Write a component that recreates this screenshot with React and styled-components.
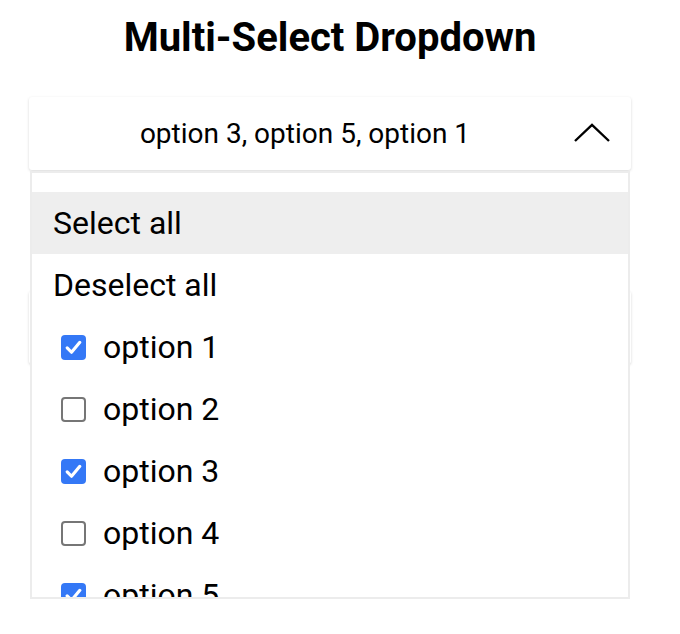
import React, { useState } from "react"
import styled, { createGlobalStyle } from "styled-components"

const GlobalStyle = createGlobalStyle`
    html, body {
        margin: 0;
        min-height: 634px;
        background: #fff;
        font-family: Roboto, "Liberation Sans", sans-serif;
        color: #000;
    }
`;

const options = ["option 1", "option 2", "option 3", "option 4", "option 5", "option 6", "option 7"];

export default function App() {
    const [selected, setSelected] = useState(["option 3", "option 5", "option 1"]);
    const [open, setOpen] = useState(true);

    const toggle = (opt) => {
        setSelected((s) => (s.includes(opt) ? s.filter((o) => o !== opt) : [...s, opt]));
    };

    return (
        <Page>
            <GlobalStyle />
            <Title>Multi-Select Dropdown</Title>

            <Wrapper>
                <Header onClick={() => setOpen(!open)}>
                    <HeaderText>{selected.join(", ")}</HeaderText>
                    <Chevron viewBox="0 0 38 20" $up={open}>
                        <polyline points="2,18 19,2 36,18" />
                    </Chevron>
                </Header>
                {open && (
                    <Menu>
                        <Item $active onClick={() => setSelected([...options])}>Select all</Item>
                        <Item onClick={() => setSelected([])}>Deselect all</Item>
                        {options.map((opt) => (
                            <Item key={opt} $option onClick={() => toggle(opt)}>
                                <Box $checked={selected.includes(opt)}>
                                    {selected.includes(opt) && (
                                        <svg viewBox="0 0 24 24" width="19" height="19">
                                            <polyline points="4,12.5 9.5,18 20,5.5" />
                                        </svg>
                                    )}
                                </Box>
                                {opt}
                            </Item>
                        ))}
                    </Menu>
                )}
            </Wrapper>

            <Wrapper>
                <Header>
                    <HeaderText>Select...</HeaderText>
                    <Chevron viewBox="0 0 38 20">
                        <polyline points="2,18 19,2 36,18" />
                    </Chevron>
                </Header>
            </Wrapper>
        </Page>
    )
}

const Page = styled.div`
    width: 602px;
    margin-left: 29px;
    padding-top: 15px;
`;

const Title = styled.h1`
    margin: 0 0 36px;
    font-size: 40px;
    line-height: 46px;
    font-weight: 700;
    text-align: center;
`;

const Wrapper = styled.div`
    position: relative;
    margin-bottom: 121px;
`;

const Header = styled.div`
    position: relative;
    height: 73px;
    display: flex;
    align-items: center;
    justify-content: center;
    border-radius: 3px;
    background: #fff;
    box-shadow: 0 1px 3px rgba(0, 0, 0, 0.16);
    cursor: pointer;
`;

const HeaderText = styled.span`
    font-size: 28px;
    margin-right: 50px;
`;

const Chevron = styled.svg`
    position: absolute;
    right: 20px;
    top: 26px;
    width: 38px;
    height: 20px;
    fill: none;
    stroke: #000;
    stroke-width: 2.4;
    transform: ${(p) => (p.$up ? "none" : "rotate(180deg)")};
`;

const Menu = styled.div`
    position: absolute;
    z-index: 2;
    top: 74px;
    left: 1px;
    width: 600px;
    height: 428px;
    box-sizing: border-box;
    padding-top: 19px;
    overflow: hidden;
    background: #fff;
    border: 2px solid #ececec;
`;

const Item = styled.div`
    height: 62px;
    display: flex;
    align-items: center;
    gap: 17px;
    padding-left: ${(p) => (p.$option ? "29px" : "21px")};
    font-size: 32px;
    background: ${(p) => (p.$active ? "#eeeeee" : "#fff")};
    cursor: pointer;
`;

const Box = styled.span`
    width: 25px;
    height: 25px;
    flex-shrink: 0;
    box-sizing: border-box;
    border-radius: 4px;
    display: flex;
    align-items: center;
    justify-content: center;
    background: ${(p) => (p.$checked ? "#3478f6" : "#fff")};
    border: ${(p) => (p.$checked ? "none" : "2px solid #767676")};
    svg {
        fill: none;
        stroke: #fff;
        stroke-width: 4;
        stroke-linecap: round;
        stroke-linejoin: round;
    }
`;
